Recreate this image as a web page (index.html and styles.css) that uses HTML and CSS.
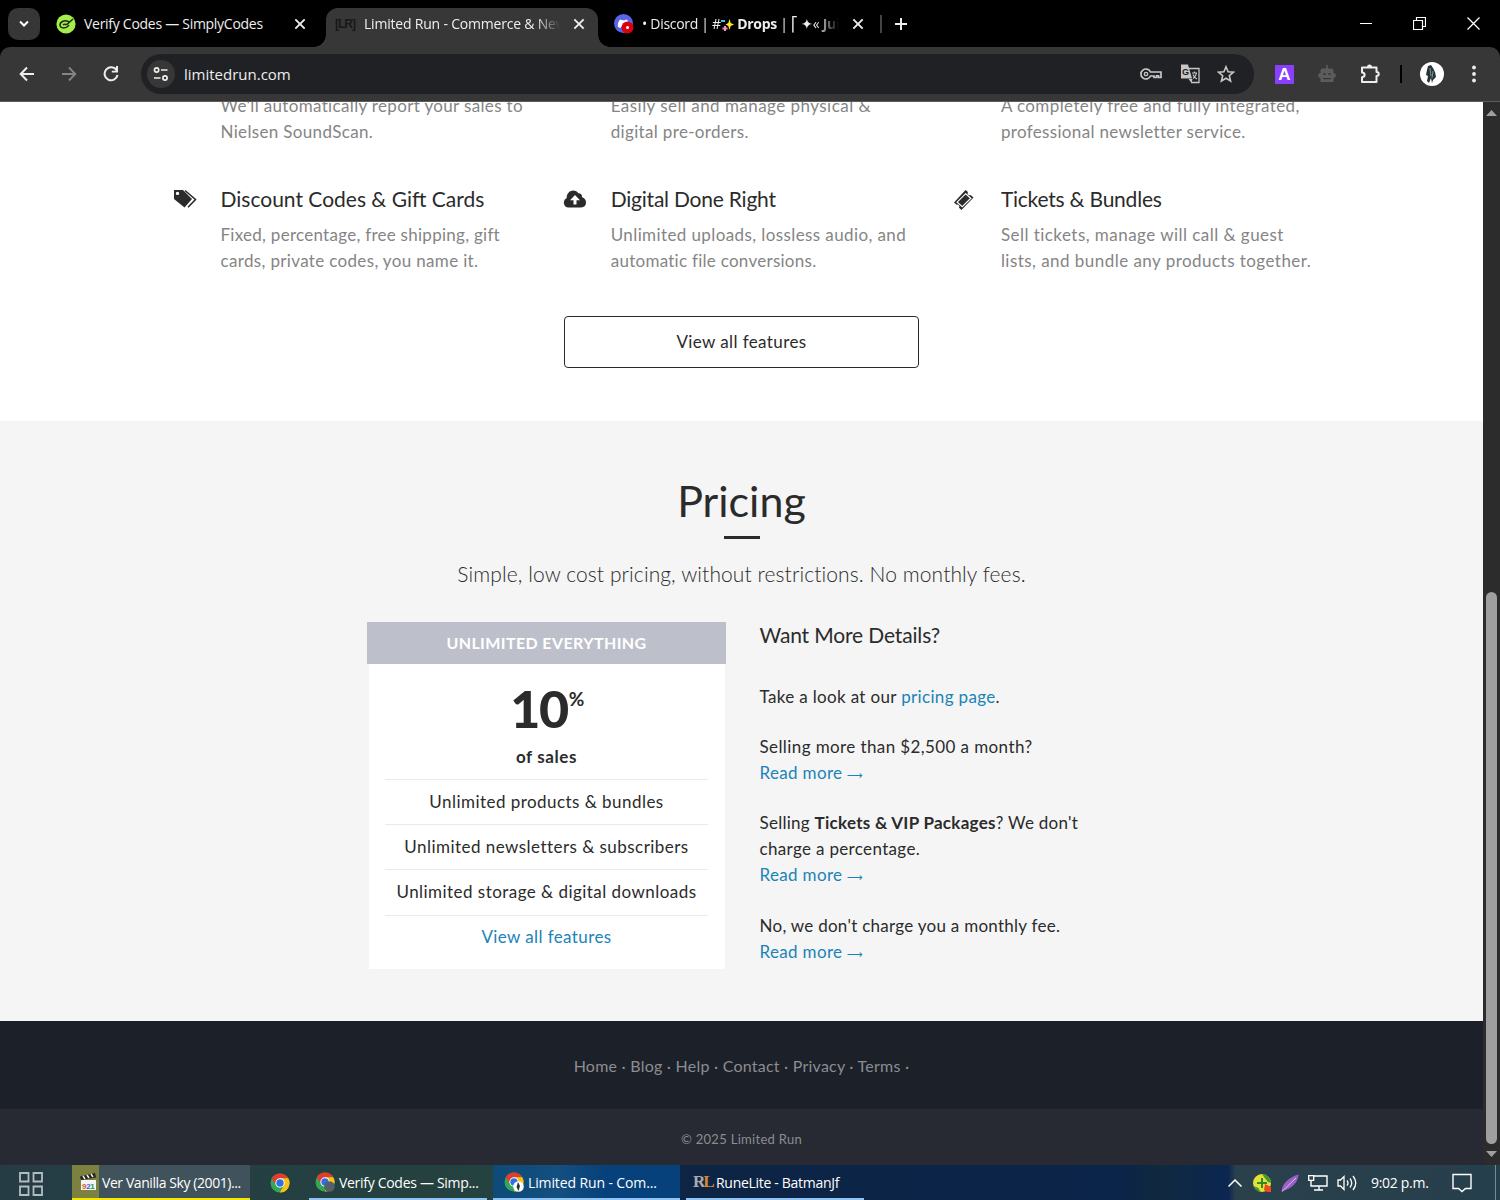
FILE: index.html
```html
<!DOCTYPE html>
<html lang="en">
<head>
  <meta charset="UTF-8">
  <title>Limited Run - Commerce &amp; Newsletters</title>
  <link rel="stylesheet" href="styles.css">
</head>
<body>
  <svg width="0" height="0" class="defs">
    <symbol id="x" viewBox="0 0 12 12"><path d="M2 2l8 8M10 2l-8 8" fill="none" stroke="#eee" stroke-width="1.6"/></symbol>
    <symbol id="chrome" viewBox="0 0 20 20">
      <circle cx="10" cy="10" r="9.5" fill="#33a852"/>
      <path d="M1.8 5.2A9.5 9.5 0 0 1 18.3 5.3H10L6 12z" fill="#e33b2e"/>
      <path d="M18.3 5.3A9.5 9.5 0 0 1 9.8 19.5L14 12.4 10 5.3z" fill="#fbc116"/>
      <circle cx="10" cy="10" r="4.7" fill="#fff"/>
      <circle cx="10" cy="10" r="3.7" fill="#2f6fe0"/>
    </symbol>
  </svg>

  <div class="tabstrip">
    <div class="tab-search"><svg width="12" height="8" viewBox="0 0 12 8"><path d="M2 1.5l4 4 4-4" fill="none" stroke="#fff" stroke-width="2"/></svg></div>
    <div class="tab tab-first">
      <svg class="fav" width="20" height="20" viewBox="0 0 20 20"><circle cx="10" cy="10" r="9.6" fill="#a5ee4c"/><path d="M14 8.500C9 4.500 3.500 8 4 11.500c.5 3.500 7 3 9-.5M7 11c2-2 3 1 5-1.500l5-4.500" fill="none" stroke="#1c2b12" stroke-width="1.500"/></svg>
      <span class="tab-title t-verify">Verify Codes — SimplyCodes</span>
      <svg class="close" width="14" height="14"><use href="#x"/></svg>
    </div>
    <div class="tab tab-active">
      <span class="fav-lr">[LR]</span>
      <span class="tab-title t-limited">Limited Run - Commerce &amp; New</span>
      <svg class="close" width="14" height="14"><use href="#x"/></svg>
    </div>
    <div class="tab tab-last">
      <svg class="fav" width="20" height="20" viewBox="0 0 20 20"><circle cx="9.500" cy="9.500" r="9.500" fill="#5865e8"/><path d="M4 13c-.5-4 1-7 3-7.500l1 .7h3l1-.7c2 .5 3.500 3.500 3 7.500l-2.500 1-1-1.500h-4L6.500 14z" fill="#fff"/><circle cx="13.500" cy="13.500" r="6" fill="#d8000c"/><circle cx="13.500" cy="13.500" r="1.500" fill="#fff"/></svg>
      <span class="tab-title t-discord">• Discord | #<svg width="13" height="13" viewBox="0 0 13 13"><path d="M8.500 1l1.200 4 3.300 1.500-3.300 1.500-1.200 4-1.200-4-2.800-1.500 2.800-1.500z" fill="#ffe81c"/><path d="M0 3h4" stroke="#3bc4e8" stroke-width="2"/><path d="M4 8v5M1.500 10.500h5" stroke="#f390b8" stroke-width="2"/></svg> <b>Drops</b> | ⎡ ✦« <b>Jui</b></span>
      <svg class="close" width="14" height="14"><use href="#x"/></svg>
    </div>
    <div class="tab-sep"></div>
    <svg class="newtab" width="14" height="14" viewBox="0 0 14 14"><path d="M7 1v12M1 7h12" stroke="#eee" stroke-width="2"/></svg>
    <div class="win">
      <svg width="12" height="12" viewBox="0 0 12 12"><path d="M0 6.500h12" stroke="#fff"/></svg>
      <svg width="13" height="13" viewBox="0 0 13 13"><path d="M.5 3.500h9v9h-9zM3.500 3.500v-3h9v9h-3" fill="none" stroke="#fff" stroke-width="1.200"/></svg>
      <svg width="13" height="13" viewBox="0 0 13 13"><path d="M.5.5l12 12M12.500.5l-12 12" stroke="#fff" stroke-width="1.300"/></svg>
    </div>
  </div>

  <div class="toolbar">
    <svg class="nav" width="16" height="16" viewBox="0 0 16 16"><path d="M15 8H2M8 1.500L1.700 8 8 14.500" fill="none" stroke="#eee" stroke-width="2"/></svg>
    <svg class="nav" width="16" height="16" viewBox="0 0 16 16"><path d="M1 8h13M8 1.500L14.300 8 8 14.500" fill="none" stroke="#858585" stroke-width="1.800"/></svg>
    <svg class="nav" width="16" height="16" viewBox="0 0 16 16"><path d="M13.700 4.500A6.500 6.500 0 1 0 14.500 9" fill="none" stroke="#eee" stroke-width="2"/><path d="M15 0v6.500H8.800V4.700H13V0z" fill="#eee"/></svg>
    <div class="omnibox">
      <div class="site-info"><svg width="16" height="14" viewBox="0 0 16 14"><g fill="none" stroke="#eee" stroke-width="1.700"><circle cx="3.600" cy="3" r="2.100"/><path d="M8 3h6.500M1 11h6.500"/><circle cx="12" cy="11" r="2.100"/></g></svg></div>
      <span class="url">limitedrun.com</span>
      <div class="omni-icons">
        <svg width="22" height="14" viewBox="0 0 22 14"><path d="M10.500 5H21v5.500h-2.500v-1.700h-2v1.700h-2.500V9h-3.500A5 5 0 1 1 10.500 5z" fill="none" stroke="#c7c7c7" stroke-width="1.700"/><circle cx="6" cy="7" r="1.700" fill="none" stroke="#c7c7c7" stroke-width="1.300"/></svg>
        <svg width="20" height="20" viewBox="0 0 20 20"><path d="M9 4.500h10v14H11" fill="none" stroke="#c7c7c7" stroke-width="1.300"/><path d="M1 .5h7l4 14H1z" fill="#c7c7c7"/><path d="M8.500 15l3 4 1-4z" fill="#c7c7c7"/><text x="2" y="11" class="gt">G</text><path d="M12 9h5M14.500 7.500V9M16.500 9c-.5 3-2 4.500-3.500 5.500M13 10.500c1 2.500 2 3.500 4 4.500" fill="none" stroke="#c7c7c7" stroke-width="1.200"/></svg>
        <svg width="18" height="18" viewBox="0 0 18 18"><path d="M9 1.800l2.100 5 5.300.4-4.100 3.500 1.300 5.300L9 13.200 4.400 16l1.300-5.300L1.600 7.200l5.300-.4z" fill="none" stroke="#c7c7c7" stroke-width="1.600"/></svg>
      </div>
    </div>
    <div class="ext-a">A</div>
    <svg class="robot" width="20" height="20" viewBox="0 0 20 20"><path d="M9.200 1h1.600v3.500h3.700a2 2 0 0 1 2 2V9a2.500 2.500 0 0 1 0 5v4h-13v-4a2.500 2.500 0 0 1 0-5V6.500a2 2 0 0 1 2-2h3.700z" fill="#5c5c5c"/><path d="M6.500 9h2v2h-2zM11.500 9h2v2h-2zM6 14h8v1.200H6z" fill="#373737"/></svg>
    <svg class="puzzle" width="21" height="20" viewBox="0 0 21 20"><path d="M2 3.500h14.500v4.500c3 0 3 4 0 4v6H2v-4.800c3.500-.2 3.500-4.600 0-4.800z" fill="none" stroke="#eee" stroke-width="2" stroke-linejoin="round"/><path d="M7 3a2.500 2.500 0 0 1 5 0z" fill="#eee"/></svg>
    <div class="tool-sep"></div>
    <svg class="avatar" width="24" height="24" viewBox="0 0 24 24"><circle cx="12" cy="12" r="12" fill="#fff"/><path d="M8 4l3-1 2 3 2 4 1 5-3 3-1 3-1-5-2 5-2-2 1-5-2-1 1-5z" fill="#253437"/><path d="M10 6l1 8M13 9l-1 7" stroke="#7e9799"/></svg>
    <svg width="4" height="18" viewBox="0 0 4 18" fill="#eee"><circle cx="2" cy="2.500" r="1.900"/><circle cx="2" cy="9" r="1.900"/><circle cx="2" cy="15.500" r="1.900"/></svg>
  </div>

  <div class="viewport">
    <div class="page">
      <div class="features">
        <div class="row row-top">
          <div class="feature"><div class="icon"></div><p class="snug">We'll automatically report your sales to<br>Nielsen SoundScan.</p></div>
          <div class="feature"><div class="icon"></div><p class="wide">Easily sell and manage physical &amp;<br><span class="snug">digital pre-orders.</span></p></div>
          <div class="feature"><div class="icon"></div><p>A completely free and fully integrated,<br><span class="snug">professional newsletter service.</span></p></div>
        </div>
        <div class="row">
          <div class="feature">
            <div class="icon"><svg width="24" height="20" viewBox="0 0 24 20"><path fill-rule="evenodd" d="M1 1h9l9 9-7.500 8.500L1 10zM4.500 2.700a1.700 1.700 0 1 0 0 3.400 1.700 1.700 0 0 0 0-3.400z" fill="#2b2b2b"/><path d="M12 1.500l10.500 9-7.500 7.700" fill="none" stroke="#2b2b2b" stroke-width="1.600"/></svg></div>
            <div><h3>Discount Codes &amp; Gift Cards</h3><p class="tight">Fixed, percentage, free shipping, gift<br><span class="snug">cards, private codes, you name it.</span></p></div>
          </div>
          <div class="feature">
            <div class="icon"><svg width="24" height="20" viewBox="0 0 24 20"><path d="M5.500 18.500a5 5 0 0 1-1.800-9.500C3.500 4.500 7 1.500 10.200 1.500c2.300 0 4 1 5 2.800 2.500-.3 4.300 1.700 3.800 4C24.500 9.500 24.500 18.500 18 18.500z" fill="#2b2b2b"/><path d="M12 6l5 5.300h-3.500V15.500h-3v-4.200H7z" fill="#fff"/></svg></div>
            <div><h3 class="narrow">Digital Done Right</h3><p>Unlimited uploads, lossless audio, and<br><span class="tight">automatic file conversions.</span></p></div>
          </div>
          <div class="feature">
            <div class="icon"><svg width="22" height="22" viewBox="0 0 22 22"><path d="M12.500 1l2.500 2a2 2 0 0 0 2.500 3l3 2.500L8.500 21 6 18.700a2 2 0 0 0-2.500-2.900L1 13.500z" fill="#2b2b2b"/><path d="M12.600 4.700l5.200 4.500-8.500 8.500-5.200-4.500z" fill="none" stroke="#fff" stroke-width="1.200"/></svg></div>
            <div><h3 class="narrow">Tickets &amp; Bundles</h3><p class="wide">Sell tickets, manage will call &amp; guest<br>lists, and bundle any products together.</p></div>
          </div>
        </div>
        <a class="btn">View all features</a>
      </div>

      <div class="pricing">
        <h2>Pricing</h2>
        <div class="rule"></div>
        <p class="lead">Simple, low cost pricing, without restrictions. No monthly fees.</p>
        <div class="plans">
          <div class="plan">
            <div class="plan-head">UNLIMITED EVERYTHING</div>
            <div class="plan-body">
              <div class="price">10<sup>%</sup></div>
              <div class="of-sales">of sales</div>
              <ul>
                <li>Unlimited products &amp; bundles</li>
                <li>Unlimited newsletters &amp; subscribers</li>
                <li>Unlimited storage &amp; digital downloads</li>
                <li><a>View all features</a></li>
              </ul>
            </div>
          </div>
          <div class="details">
            <h3>Want More Details?</h3>
            <p class="snug">Take a look at our <a>pricing page</a>.</p>
            <p>Selling more than $2,500 a month?<br><a>Read more <i>⟶</i></a></p>
            <p class="tight">Selling <b>Tickets &amp; VIP Packages</b>? We don't<br><span class="snug">charge a percentage.</span><br><a>Read more <i>⟶</i></a></p>
            <p class="tight">No, we don't charge you a monthly fee.<br><a>Read more <i>⟶</i></a></p>
          </div>
        </div>
      </div>

      <div class="footer">Home · Blog · Help · Contact · Privacy · Terms ·</div>
      <div class="copyright">© 2025 Limited Run</div>
    </div>
    <div class="scrollbar">
      <svg width="11" height="6" viewBox="0 0 11 6"><path d="M0 6L5.500 0 11 6z" fill="#a0a0a0"/></svg>
      <div class="thumb"></div>
      <svg width="11" height="6" viewBox="0 0 11 6"><path d="M0 0l5.500 6L11 0z" fill="#a0a0a0"/></svg>
    </div>
  </div>

  <div class="taskbar">
    <svg class="taskview" width="24" height="24" viewBox="0 0 24 24"><path d="M1 1h8.500v8.500H1zM14.500 1H23v8.500h-8.500zM1 14.500h8.500V23H1zM14.500 14.500H23V23h-8.500z" fill="none" stroke="#b5bcc0" stroke-width="1.800"/></svg>
    <div class="task task-video">
      <svg width="18" height="18" viewBox="0 0 18 18"><path d="M1 7h15v10H1z" fill="#f4f4f4"/><path d="M0 3.500L15 0l1 4.500L1 7z" fill="#222"/><path d="M3 3l2 3M7 2l2 3M11 1l2 3" stroke="#eee" stroke-width="1.500"/><text x="2" y="15.500" class="clap"><tspan fill="#e2562a">9</tspan><tspan fill="#286fd0">2</tspan><tspan fill="#28993b">1</tspan></text></svg>
      <span>Ver Vanilla Sky (2001)...</span>
    </div>
    <svg class="pinned" width="20" height="20"><use href="#chrome"/></svg>
    <div class="task task-codes">
      <svg width="20" height="20" viewBox="0 0 20 20"><use href="#chrome"/><circle cx="14.500" cy="14.500" r="5.300" fill="#54606a"/></svg>
      <span>Verify Codes — Simp...</span>
    </div>
    <div class="task task-run">
      <svg width="20" height="20" viewBox="0 0 20 20"><use href="#chrome"/><circle cx="14.500" cy="14.500" r="5.300" fill="#fff"/><path d="M14 10l2 4-1.500 5-2-4z" fill="#26383b"/></svg>
      <span>Limited Run - Com...</span>
    </div>
    <div class="task task-rune">
      <span class="rl"><em>R</em>L</span>
      <span>RuneLite - BatmanJf</span>
    </div>
    <div class="tray">
      <svg width="16" height="10" viewBox="0 0 16 10"><path d="M1.500 8.500L8 2l6.500 6.500" fill="none" stroke="#fff" stroke-width="1.500"/></svg>
      <svg width="20" height="20" viewBox="0 0 20 20"><circle cx="10" cy="10" r="9" fill="#e8df37"/><path d="M10 1a9 9 0 0 1 9 9l-3-1-4-5zM1.500 13l5 2 2 4a9 9 0 0 1-7-6z" fill="#3a9a35"/><path d="M10 5v10M5 10h10" stroke="#2e8b2c" stroke-width="2"/><path d="M13 11l6 3v5h-4l-3-2z" fill="#e84b1d"/></svg>
      <svg width="18" height="18" viewBox="0 0 18 18"><path d="M.5 17.500C1 9 9 3 17.500.500 17 9 11 14.500.5 17.500z" fill="#9a5fc5"/><path d="M1 17.500L15 4" stroke="#d9bfed"/></svg>
      <svg width="20" height="17" viewBox="0 0 20 17"><path d="M6 2h13v10H3V6M11 12v4M6 16h9" fill="none" stroke="#fff" stroke-width="1.400"/><path d="M.7 1.700h5v4.600h-5z" fill="#30454d" stroke="#fff" stroke-width="1.300"/></svg>
      <svg width="20" height="18" viewBox="0 0 20 18"><path d="M1 6h2.500L7 2.500v13L3.500 12H1z" fill="none" stroke="#fff" stroke-width="1.300"/><path d="M10 6.500q2 2.500 0 5M13 4.500q3.500 4.500 0 9M16 2q5.500 7 0 14" fill="none" stroke="#fff" stroke-width="1.300"/></svg>
      <span class="clock">9:02 p.m.</span>
      <svg width="20" height="20" viewBox="0 0 20 20"><path d="M1 1.500h18v14h-5.500L10 18.500l-3.500-3H1z" fill="none" stroke="#fff" stroke-width="1.400"/></svg>
      <div class="show-desktop"></div>
    </div>
  </div>
</body>
</html>
```
FILE: styles.css
```css
* {
  box-sizing: border-box;
}
body {
  margin: 0;
  width: 1500px;
  height: 1200px;
  overflow: hidden;
  display: flex;
  flex-direction: column;
  background: #000;
  font-family: "Open Sans", "Noto Sans", sans-serif;
}
svg {
  display: block;
  flex: none;
}
.defs {
  position: absolute;
}
h2, h3, p, ul {
  margin: 0;
  padding: 0;
}

/* browser chrome */
.tabstrip {
  height: 47px;
  flex: none;
  display: flex;
  align-items: center;
  background: #000;
  color: #eee;
  font-size: 14px;
}
.tab-search {
  width: 32px;
  height: 32px;
  margin-left: 8px;
  border-radius: 10px;
  background: #363636;
  display: flex;
  align-items: center;
  justify-content: center;
}
.tab {
  height: 39px;
  margin-top: 8px;
  padding-bottom: 8px;
  display: flex;
  align-items: center;
}
.tab-first {
  width: 286px;
  padding-left: 16px;
}
.tab-active {
  position: relative;
  width: 272px;
  padding-left: 9px;
  background: #373737;
  border-radius: 12px 12px 0 0;
}
.tab-active::before, .tab-active::after {
  content: "";
  position: absolute;
  bottom: 0;
  width: 12px;
  height: 12px;
}
.tab-active::before {
  left: -12px;
  background: radial-gradient(circle at 0 0, #000 11.5px, #373737 12px);
}
.tab-active::after {
  right: -12px;
  background: radial-gradient(circle at 100% 0, #000 11.5px, #373737 12px);
}
.tab-last {
  width: 282px;
  padding-left: 16px;
}
.tab-title {
  margin-left: 8px;
  overflow: hidden;
  white-space: nowrap;
  font-size: 14px;
}
.t-verify {
  width: 203px;
  letter-spacing: -0.28px;
}
.t-limited {
  width: 196px;
  margin-left: 9px;
  letter-spacing: -0.2px;
  -webkit-mask-image: linear-gradient(90deg, #000 88%, transparent);
}
.t-discord {
  width: 197px;
  margin-left: 8px;
  letter-spacing: -0.3px;
  -webkit-mask-image: linear-gradient(90deg, #000 88%, transparent);
}
.t-discord svg {
  display: inline-block;
  vertical-align: -2px;
}
.close {
  margin-left: 6px;
}
.tab-active .close, .tab-last .close {
  margin-left: 12px;
}
.fav-lr {
  width: 20px;
  color: #181818;
  font: bold 12px "Liberation Sans", sans-serif;
  letter-spacing: -1px;
}
.tab-sep {
  width: 2px;
  height: 18px;
  background: #444;
}
.newtab {
  margin-left: 12px;
}
.win {
  display: flex;
  gap: 41px;
  margin-left: auto;
  padding-right: 20px;
}
.toolbar {
  height: 55px;
  flex: none;
  display: flex;
  align-items: center;
  padding: 0 23px 0 19px;
  background: #373737;
  border-bottom: 1px solid #5c5c5c;
  border-radius: 10px 10px 0 0;
}
.nav {
  margin-right: 26px;
}
.omnibox {
  width: 1113px;
  flex: none;
  height: 40px;
  margin-left: -4px;
  padding: 0 19px 0 6px;
  border-radius: 20px;
  background: #202124;
  display: flex;
  align-items: center;
}
.site-info {
  width: 28px;
  height: 28px;
  border-radius: 50%;
  background: #373737;
  display: flex;
  align-items: center;
  justify-content: center;
}
.url {
  margin-left: 9px;
  color: #eee;
  font-size: 15px;
}
.omni-icons {
  display: flex;
  align-items: center;
  gap: 17.5px;
  margin-left: auto;
}
.gt {
  font: bold 9px "Liberation Sans", sans-serif;
  fill: #202124;
}
.ext-a {
  width: 19px;
  height: 19px;
  flex: none;
  margin-left: 21px;
  background: #8a3ffc;
  color: #fff;
  font: bold 17px/19px "Liberation Sans", sans-serif;
  text-align: center;
}
.robot {
  margin-left: 23px;
}
.puzzle {
  margin-left: 23px;
}
.tool-sep {
  width: 2px;
  height: 18px;
  flex: none;
  margin-left: 19px;
  background: #000;
}
.avatar {
  margin: 0 28px 0 18px;
}

/* page */
.viewport {
  height: 1063px;
  flex: none;
  display: flex;
}
.page {
  width: 1483px;
  overflow: hidden;
  background: #fff;
  color: #2b2b2b;
  font-family: Lato, "Open Sans", sans-serif;
  font-size: 17px;
  line-height: 26px;
  letter-spacing: 0.4px;
}
.page a {
  color: #1a83b8;
}
.features {
  display: flow-root;
  height: 319px;
  padding-left: 173px;
}
.row {
  display: flex;
  margin-top: 40px;
}
.row-top {
  margin-top: -9px;
}
.feature {
  display: flex;
  width: 390.2px;
  flex: none;
}
.feature .icon {
  width: 47.5px;
  padding-top: 4px;
  flex: none;
}
.feature p {
  color: #858585;
  white-space: nowrap;
}
.page .snug {
  letter-spacing: 0.34px;
}
.page .tight {
  letter-spacing: 0.27px;
}
.page .wide {
  letter-spacing: 0.46px;
}
.feature h3 {
  font-size: 21px;
  font-weight: 400;
  line-height: 28px;
  letter-spacing: 0;
  margin-bottom: 9px;
}
.feature h3.narrow {
  letter-spacing: -0.22px;
}
.page .features .btn {
  display: block;
  width: 355px;
  height: 52px;
  margin: 42px 0 0 391px;
  border: 1px solid #2b2b2b;
  border-radius: 4px;
  color: #2b2b2b;
  text-align: center;
  line-height: 50px;
}
.pricing {
  height: 600px;
  padding-top: 50px;
  background: #f5f5f5;
}
.pricing h2 {
  font-size: 43px;
  font-weight: 400;
  line-height: 60px;
  letter-spacing: 0;
  text-align: center;
}
.rule {
  width: 36px;
  height: 3px;
  margin: 5px auto 0;
  background: #2b2b2b;
}
.lead {
  margin-top: 22px;
  font-size: 21px;
  font-weight: 300;
  letter-spacing: 0.1px;
  text-align: center;
}
.plans {
  display: flex;
  margin: 35px 0 0 367px;
}
.plan {
  width: 359px;
  text-align: center;
}
.plan-head {
  height: 42px;
  background: #bdc0ca;
  color: #fff;
  font-size: 16px;
  font-weight: 700;
  line-height: 42px;
}
.plan-body {
  height: 305px;
  margin: 0 1px 0 2px;
  padding: 14px 17px 0 16px;
  background: #fff;
}
.price {
  height: 62px;
  font-size: 52px;
  font-weight: 900;
  line-height: 60px;
  letter-spacing: -1.5px;
}
.price sup {
  margin-left: 1px;
  font-size: 19px;
  font-weight: 700;
  line-height: 0;
  vertical-align: 22px;
}
.of-sales {
  height: 39px;
  font-weight: 700;
  line-height: 33px;
  letter-spacing: 0.6px;
}
.plan ul {
  list-style: none;
}
.plan li {
  height: 45.2px;
  border-top: 1px solid #e9e9e9;
  line-height: 44px;
  letter-spacing: 0.46px;
  white-space: nowrap;
}
.plan li:last-child {
  line-height: 42px;
  letter-spacing: 0.4px;
}
.details {
  margin-left: 33.5px;
}
.details h3 {
  margin: -1px 0 35px;
  font-size: 21px;
  font-weight: 400;
  line-height: 28px;
  letter-spacing: -0.15px;
}
.details p {
  margin-bottom: 24px;
  line-height: 26.1px;
  white-space: nowrap;
}
.details p a {
  letter-spacing: 0.34px;
}
.details i {
  font: normal 11px "DejaVu Sans", sans-serif;
}
.footer {
  height: 88px;
  background: #1c2029;
  color: #8b8d92;
  font-size: 16px;
  line-height: 90px;
  letter-spacing: 0.23px;
  text-align: center;
}
.copyright {
  height: 56px;
  background: #272a33;
  color: #8b8d92;
  font-size: 13px;
  line-height: 60px;
  letter-spacing: 0.3px;
  text-align: center;
}
.scrollbar {
  width: 17px;
  padding: 8px 0 8px 3px;
  background: #2c2c2c;
}
.thumb {
  width: 11px;
  height: 552px;
  margin: 476px 0 7px;
  border-radius: 6px;
  background: #9f9f9f;
}

/* taskbar */
.taskbar {
  height: 35px;
  flex: none;
  display: flex;
  align-items: center;
  background: linear-gradient(90deg, #253c45 0, #24423f 492px, #0d2444 690px, #0b2449 1120px, #10293f 1160px, #0b2650 1228px, #2a414c 1236px, #263f4c 100%);
  color: #fff;
  font-size: 14px;
  letter-spacing: -0.3px;
}
.taskview {
  margin: 3px 0 0 19px;
}
.task {
  height: 35px;
  padding-top: 1px;
  border-bottom: 2px solid #8fc3f5;
  display: flex;
  align-items: center;
  white-space: nowrap;
}
.task-video {
  width: 178px;
  margin-left: 29px;
  padding-left: 8px;
  border-color: #f5e800;
  background: linear-gradient(90deg, #7d8140 27px, #40525b 27px);
}
.task-video span {
  margin-left: 4px;
  letter-spacing: -0.42px;
}
.clap {
  font: bold 8px "Liberation Sans", sans-serif;
}
.pinned {
  margin-left: 20px;
}
.task-codes {
  width: 178px;
  margin-left: 19px;
  padding-left: 6px;
}
.task-codes span, .task-run span {
  margin-left: 4px;
}
.task-run {
  width: 187px;
  margin-left: 6px;
  padding-left: 11px;
  background: linear-gradient(90deg, #0f4b78, #134f7f 35%, #06417b 60%);
}
.task-run span {
  letter-spacing: -0.12px;
}
.task-rune {
  width: 178px;
  margin-left: 6px;
  padding-left: 7px;
}
.rl {
  width: 23px;
  color: #d98732;
  font: bold 17px "Liberation Serif", serif;
  letter-spacing: -2px;
}
.rl em {
  color: #aaa;
  font-style: normal;
}
.tray {
  height: 35px;
  margin-left: auto;
  display: flex;
  align-items: center;
  gap: 9px;
}
.clock {
  width: 72px;
  margin-left: 5px;
}
.show-desktop {
  width: 5px;
  height: 35px;
  margin-left: 14px;
  border-left: 1px solid #7c8b93;
}
```
